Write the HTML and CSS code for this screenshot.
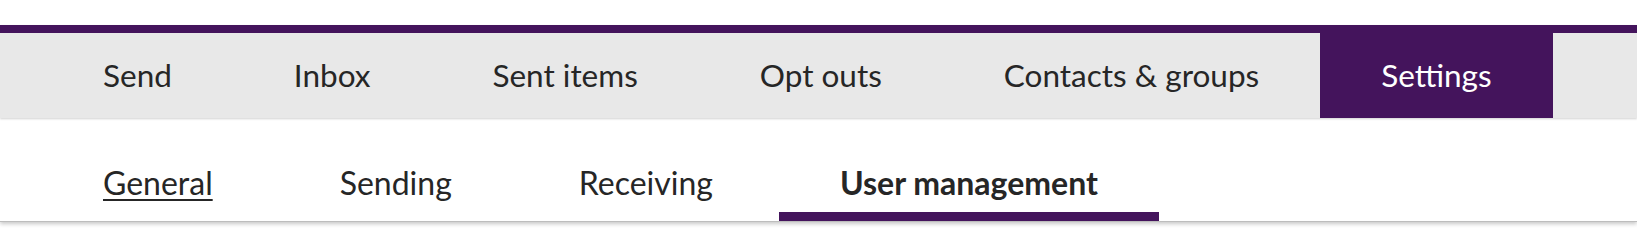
FILE: index.html
```html
<!DOCTYPE html>
<html lang="en">
<head>
<meta charset="utf-8">
<title>Settings - User management</title>
<link rel="stylesheet" href="styles.css">
</head>
<body>
<header class="header">
  <nav class="main-nav">
    <a class="main-item" href="#">Send</a>
    <a class="main-item" href="#">Inbox</a>
    <a class="main-item" href="#">Sent items</a>
    <a class="main-item" href="#">Opt outs</a>
    <a class="main-item" href="#">Contacts &amp; groups</a>
    <a class="main-item active" href="#">Settings</a>
  </nav>
  <nav class="sub-nav">
    <a class="sub-item link" href="#"><span>General</span></a>
    <a class="sub-item" href="#"><span>Sending</span></a>
    <a class="sub-item" href="#"><span>Receiving</span></a>
    <a class="sub-item current" href="#"><span>User management</span></a>
  </nav>
</header>
</body>
</html>
```
FILE: styles.css
```css
html, body {
  margin: 0;
  padding: 0;
  background: #ffffff;
}
body {
  font-family: Lato, "Open Sans", sans-serif;
  color: #262626;
}
.header {
  padding-top: 25px;
  padding-bottom: 20px;
}
.main-nav {
  display: flex;
  height: 85px;
  padding-left: 42px;
  background: #e8e8e8;
  border-top: 8px solid #44145c;
  box-shadow: 0 1px 2px rgba(0, 0, 0, 0.18);
  position: relative;
  z-index: 2;
}
.main-item {
  display: block;
  padding: 0 61px;
  line-height: 85px;
  font-size: 31.5px;
  color: #262626;
  text-decoration: none;
  white-space: nowrap;
}
.main-item.active {
  background: #44145c;
  color: #ffffff;
  margin-top: -8px;
  height: 93px;
  line-height: 101px;
  box-sizing: border-box;
}
.sub-nav {
  display: flex;
  gap: 5px;
  height: 104px;
  box-sizing: border-box;
  padding-left: 42px;
  background: #ffffff;
  border-bottom: 1px solid #bdbdbd;
  box-shadow: 0 2px 4px rgba(0, 0, 0, 0.22);
  position: relative;
  z-index: 1;
}
.sub-item {
  display: flex;
  flex-direction: column;
  justify-content: flex-end;
  padding: 0 61px 9px;
  border-bottom: 9px solid transparent;
  font-size: 32px;
  line-height: 40px;
  color: #262626;
  text-decoration: none;
  white-space: nowrap;
}
.sub-item.link span {
  text-decoration: underline;
  text-decoration-thickness: 2px;
  text-underline-offset: 4px;
}
.sub-item.current {
  font-weight: 700;
  border-bottom-color: #44145c;
}
```
